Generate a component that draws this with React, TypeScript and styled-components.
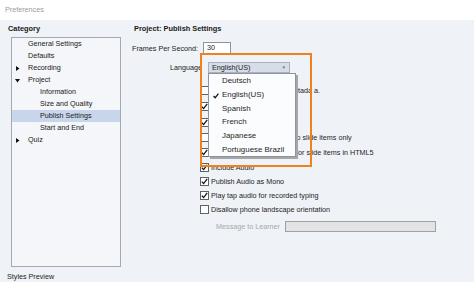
import React from "react";
import styled, { createGlobalStyle } from "styled-components";

const GlobalStyle = createGlobalStyle`
    html, body {
        margin: 0;
        padding: 0;
        background: #ffffff;
    }
    body {
        font-family: "Liberation Sans", Arial, sans-serif;
        font-size: 7.2px;
        color: #1e1e1e;
    }
`;

//Janela inteira
const Window = styled.div`
    position: relative;
    width: 474px;
    height: 285px;
    background: #ffffff;
    overflow: hidden;
`;

const TitleBar = styled.div`
    height: 20px;
    line-height: 20px;
    padding-left: 5px;
    color: #9a9a9a;
    font-size: 7.2px;
`;

const Panel = styled.div`
    display: flex;
    height: 262px;
    background: #eff2f7;
`;

const Sidebar = styled.div`
    width: 127px;
    padding: 4px 0 0 8px;
    box-sizing: border-box;
    display: flex;
    flex-direction: column;
`;

const Heading = styled.div`
    font-weight: bold;
    font-size: 7.4px;
    line-height: 10px;
    height: 10px;
    color: #1a1a1a;
`;

const TreeBox = styled.div`
    margin: 3px 0 0 3px;
    width: 110px;
    height: 230px;
    box-sizing: border-box;
    border: 1px solid #a3a9b3;
    background: #f4f6f9;
`;

const TreeRow = styled.div<{ $level: number; $selected?: boolean }>`
    position: relative;
    height: 12px;
    line-height: 12px;
    padding-left: ${(p) => (p.$level === 0 ? 16 : 28)}px;
    background: ${(p) => (p.$selected ? "#c7d6eb" : "transparent")};
    color: #202020;
`;

const Arrow = styled.svg`
    position: absolute;
    left: 3px;
    top: 4px;
`;

const Footer = styled.div`
    margin-top: 5px;
    line-height: 10px;
    margin-left: -1px;
    color: #222;
`;

const Main = styled.div`
    flex: 1;
    padding: 4px 0 0 7px;
    display: flex;
    flex-direction: column;
`;

const FieldRow = styled.div<{ $top: number; $height: number }>`
    display: flex;
    align-items: center;
    margin-top: ${(p) => p.$top}px;
    height: ${(p) => p.$height}px;
`;

const FieldLabel = styled.div<{ $width: number; $muted?: boolean }>`
    flex: none;
    width: ${(p) => p.$width}px;
    display: flex;
    justify-content: flex-end;
    white-space: nowrap;
    padding-right: 5px;
    box-sizing: border-box;
    color: ${(p) => (p.$muted ? "#a7a9ad" : "#222")};
`;

const TextInput = styled.div`
    width: 28px;
    height: 12px;
    box-sizing: border-box;
    border: 1px solid #8d939c;
    background: #ffffff;
    line-height: 10px;
    padding-left: 3px;
`;

const SelectWrap = styled.div`
    position: relative;
    margin-left: 1px;
`;

const Select = styled.div`
    width: 82px;
    height: 11px;
    box-sizing: border-box;
    border: 1px solid #a9b1bf;
    background: #d7dde8;
    line-height: 9px;
    padding-left: 3px;
    display: flex;
    justify-content: space-between;
    align-items: center;
`;

const Caret = styled.span`
    font-size: 4.5px;
    color: #6c7380;
    padding-right: 3px;
`;

const DropList = styled.div`
    position: absolute;
    top: 11px;
    left: 0;
    width: 88px;
    height: 84px;
    box-sizing: border-box;
    background: #fbfcfd;
    border: 1px solid #8f939a;
    box-shadow: 2px 2px 0 #a4a6aa;
    z-index: 5;
`;

const DropItem = styled.div`
    position: relative;
    height: 13.8px;
    line-height: 13.8px;
    padding-left: 13px;
    font-size: 7.9px;
    color: #1f1f1f;
`;

const Tick = styled.svg`
    position: absolute;
    left: 4px;
    top: 5px;
`;

const CheckRow = styled.div<{ $height: number }>`
    display: flex;
    align-items: center;
    height: ${(p) => p.$height}px;
    white-space: nowrap;
`;

const Box = styled.div`
    flex: none;
    width: 9px;
    height: 9px;
    box-sizing: border-box;
    border: 1px solid #5f6368;
    background: #ffffff;
    margin-left: 66px;
    margin-right: 2px;
    display: flex;
    align-items: center;
    justify-content: center;
`;

const LearnerInput = styled.div`
    width: 151px;
    height: 11px;
    box-sizing: border-box;
    border: 1px solid #9da0a5;
    background: #e3e3e3;
`;

const Highlight = styled.div`
    position: absolute;
    left: 200px;
    top: 53px;
    width: 112px;
    height: 114px;
    box-sizing: border-box;
    border: 2.5px solid #f0821d;
    z-index: 6;
    pointer-events: none;
`;

const tree = [
    { label: "General Settings", level: 0 },
    { label: "Defaults", level: 0 },
    { label: "Recording", level: 0, arrow: "right" },
    { label: "Project", level: 0, arrow: "down" },
    { label: "Information", level: 1 },
    { label: "Size and Quality", level: 1 },
    { label: "Publish Settings", level: 1, selected: true },
    { label: "Start and End", level: 1 },
    { label: "Quiz", level: 0, arrow: "right" },
];

const languages = ["Deutsch", "English(US)", "Spanish", "French", "Japanese", "Portuguese Brazil"];

const checks = [
    { label: "Mostrar en la pantalla adaptada a.", checked: false, h: 16 },
    { label: "Include Mouse", checked: true, h: 16 },
    { label: "Enable Accessibility", checked: true, h: 16 },
    { label: "Restrict keyboard tabbing to slide items only", checked: false, h: 15 },
    { label: "Hide focus rectangle color for slide items in HTML5", checked: true, h: 15 },
    { label: "Include Audio", checked: true, h: 14 },
    { label: "Publish Audio as Mono", checked: true, h: 14 },
    { label: "Play tap audio for recorded typing", checked: true, h: 14 },
    { label: "Disallow phone landscape orientation", checked: false, h: 14 },
];

const CheckMark = () => (
    <svg width="7" height="7" viewBox="0 0 7 7">
        <polyline points="0.8,3.6 2.6,5.6 6.2,0.8" fill="none" stroke="#111" strokeWidth="1.3" />
    </svg>
);

const App = () => {
    return (
        <Window>
            <GlobalStyle />
            <TitleBar>Preferences</TitleBar>
            <Panel>
                <Sidebar>
                    <Heading>Category</Heading>
                    <TreeBox>
                        {tree.map((t) => (
                            <TreeRow key={t.label} $level={t.level} $selected={t.selected}>
                                {t.arrow === "right" && (
                                    <Arrow width="5" height="5" viewBox="0 0 5 5">
                                        <polygon points="1,0 4.5,2.5 1,5" fill="#111" />
                                    </Arrow>
                                )}
                                {t.arrow === "down" && (
                                    <Arrow width="5" height="5" viewBox="0 0 5 5">
                                        <polygon points="0,1 5,1 2.5,4.5" fill="#111" />
                                    </Arrow>
                                )}
                                {t.label}
                            </TreeRow>
                        ))}
                    </TreeBox>
                    <Footer>Styles Preview</Footer>
                </Sidebar>
                <Main>
                    <Heading>Project: Publish Settings</Heading>
                    <FieldRow $top={8} $height={12}>
                        <FieldLabel $width={69}>Frames Per Second:</FieldLabel>
                        <TextInput>30</TextInput>
                    </FieldRow>
                    <FieldRow $top={8} $height={11}>
                        <FieldLabel $width={73}>Language</FieldLabel>
                        <SelectWrap>
                            <Select>
                                English(US)
                                <Caret>▼</Caret>
                            </Select>
                            <DropList>
                                {languages.map((l) => (
                                    <DropItem key={l}>
                                        {l === "English(US)" && (
                                            <Tick width="6" height="6" viewBox="0 0 6 6">
                                                <polyline points="0.6,3 2.2,4.8 5.4,0.6" fill="none" stroke="#111" strokeWidth="1.3" />
                                            </Tick>
                                        )}
                                        {l}
                                    </DropItem>
                                ))}
                            </DropList>
                        </SelectWrap>
                    </FieldRow>
                    <div style={{ height: 9 }} />
                    {checks.map((c) => (
                        <CheckRow key={c.label} $height={c.h}>
                            <Box>{c.checked && <CheckMark />}</Box>
                            {c.label}
                        </CheckRow>
                    ))}
                    <FieldRow $top={5} $height={11}>
                        <FieldLabel $width={151} $muted>Message to Learner</FieldLabel>
                        <LearnerInput />
                    </FieldRow>
                </Main>
            </Panel>
            <Highlight />
        </Window>
    );
};

export default App;
